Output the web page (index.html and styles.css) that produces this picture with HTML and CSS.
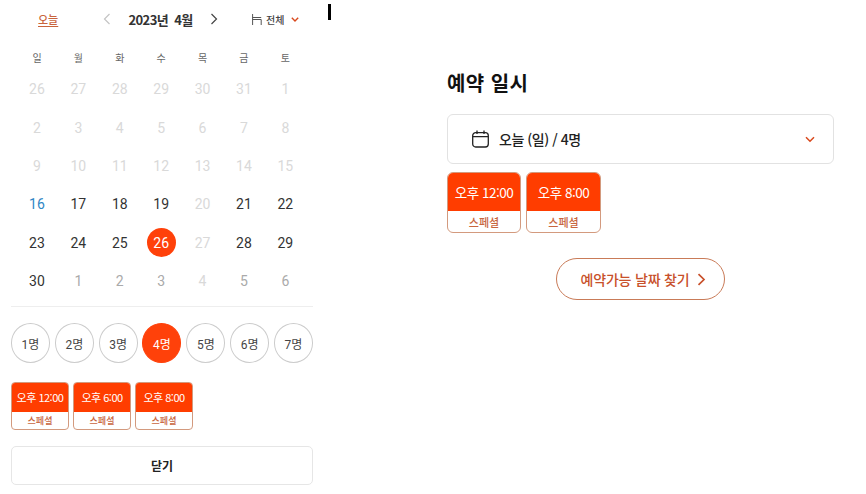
FILE: index.html
```html
<!DOCTYPE html>
<html lang="ko">
<head>
<meta charset="utf-8">
<title>예약 일시</title>
<link rel="stylesheet" href="styles.css">
</head>
<body>
<div class="cursor"></div>
<main class="page">
  <section class="panel">
    <header class="cal-head">
      <a class="today">오늘</a>
      <div class="month-nav">
        <svg class="nav" width="8" height="12" viewBox="0 0 8 12"><path d="M6.500 1 1.500 6l5 5" fill="none" stroke="#c4c4c4" stroke-width="1.200"/></svg>
        <strong class="month">2023년&nbsp; 4월</strong>
        <svg class="nav" width="8" height="12" viewBox="0 0 8 12"><path d="M1.500 1l5 5-5 5" fill="none" stroke="#444" stroke-width="1.200"/></svg>
      </div>
      <div class="seat-filter">
        <svg width="10" height="11" viewBox="0 0 10 11"><path d="M.6 0v11M.6 5.500h8.600V11M.6 3.500h8.600" fill="none" stroke="#555" stroke-width="1"/></svg>
        <span>전체</span>
        <svg width="8" height="5" viewBox="0 0 8 5"><path d="M.8.8 4 4l3.200-3.200" fill="none" stroke="#d9481c" stroke-width="1.400"/></svg>
      </div>
    </header>
    <div class="cal-grid">
      <span class="wd">일</span><span class="wd">월</span><span class="wd">화</span><span class="wd">수</span><span class="wd">목</span><span class="wd">금</span><span class="wd">토</span>
      <span class="d off">26</span><span class="d off">27</span><span class="d off">28</span><span class="d off">29</span><span class="d off">30</span><span class="d off">31</span><span class="d off">1</span>
      <span class="d off">2</span><span class="d off">3</span><span class="d off">4</span><span class="d off">5</span><span class="d off">6</span><span class="d off">7</span><span class="d off">8</span>
      <span class="d off">9</span><span class="d off">10</span><span class="d off">11</span><span class="d off">12</span><span class="d off">13</span><span class="d off">14</span><span class="d off">15</span>
      <span class="d holiday">16</span><span class="d">17</span><span class="d">18</span><span class="d">19</span><span class="d off">20</span><span class="d">21</span><span class="d">22</span>
      <span class="d">23</span><span class="d">24</span><span class="d">25</span><span class="d"><b class="sel">26</b></span><span class="d off">27</span><span class="d">28</span><span class="d">29</span>
      <span class="d">30</span><span class="d next">1</span><span class="d next">2</span><span class="d next">3</span><span class="d off">4</span><span class="d next">5</span><span class="d next">6</span>
    </div>
    <div class="party">
      <span class="p">1명</span><span class="p">2명</span><span class="p">3명</span><span class="p active">4명</span><span class="p">5명</span><span class="p">6명</span><span class="p">7명</span>
    </div>
    <div class="slots small">
      <div class="slot"><div class="time">오후 12:00</div><div class="kind">스페셜</div></div>
      <div class="slot"><div class="time">오후 6:00</div><div class="kind">스페셜</div></div>
      <div class="slot"><div class="time">오후 8:00</div><div class="kind">스페셜</div></div>
    </div>
    <button class="close">닫기</button>
  </section>
  <section class="detail">
    <h2 class="title">예약 일시</h2>
    <div class="picker">
      <svg width="17" height="18" viewBox="0 0 17 18"><rect x=".7" y="2.600" width="15.600" height="14.400" rx="3" fill="none" stroke="#222" stroke-width="1.300"/><path d="M.7 6.600h15.600M5 .6v3.400M12 .6v3.400" fill="none" stroke="#222" stroke-width="1.300"/></svg>
      <span class="picker-text">오늘 (일) / 4명</span>
      <svg class="picker-caret" width="10" height="7" viewBox="0 0 10 7"><path d="M1 1.200 5 5.200l4-4" fill="none" stroke="#d9481c" stroke-width="1.500"/></svg>
    </div>
    <div class="slots large">
      <div class="slot"><div class="time">오후 12:00</div><div class="kind">스페셜</div></div>
      <div class="slot"><div class="time">오후 8:00</div><div class="kind">스페셜</div></div>
    </div>
    <div class="find-wrap">
      <button class="find">예약가능 날짜 찾기
        <svg width="9" height="13" viewBox="0 0 9 13"><path d="M1.500 1.200 7 6.500l-5.500 5.300" fill="none" stroke="#c8502a" stroke-width="1.700"/></svg>
      </button>
    </div>
  </section>
</main>
</body>
</html>
```
FILE: styles.css
```css
* { box-sizing: border-box; }
html, body { margin: 0; padding: 0; background: #fff; }
body {
  width: 866px;
  height: 494px;
  overflow: hidden;
  position: relative;
  font-family: "Noto Sans CJK KR", "Noto Sans", sans-serif;
  color: #222;
}
.cursor { position: absolute; left: 328px; top: 4px; width: 3px; height: 16px; background: #000; }
.page { display: flex; align-items: flex-start; padding-left: 11px; }
.panel { width: 302px; flex: none; }
.cal-head { display: flex; align-items: center; height: 38px; }
.today { width: 74px; padding-left: 27px; font-size: 11px; font-weight: 500; color: #c9643c; text-decoration: underline; text-underline-offset: 2px; }
.month-nav { display: flex; align-items: center; width: 133px; padding-left: 18px; }
.month-nav .nav { flex: none; }
.month { font-size: 13px; font-weight: 700; letter-spacing: -.6px; color: #333; white-space: nowrap; margin: 0 auto; }
.seat-filter { display: flex; align-items: center; margin-left: 34px; font-size: 10px; font-weight: 500; color: #444; gap: 4px; }
.seat-filter span { margin-right: 3px; }
.cal-grid { display: grid; grid-template-columns: repeat(7, 41.400px); margin-top: 7px; padding-left: 5.300px; grid-template-rows: 25px; grid-auto-rows: 38.400px; padding-bottom: 6px; border-bottom: 1px solid #eee; }
.wd, .d { display: flex; align-items: center; justify-content: center; }
.wd { font-size: 10px; color: #666; }
.d { font-size: 14px; font-family: "Roboto", sans-serif; color: #333; }
.off { color: #d9d9d9; }
.next { color: #aaa; }
.holiday { color: #2f86c5; }
.sel { width: 29px; height: 29px; border-radius: 50%; background: #ff410a; color: #fff; font-weight: 400; display: flex; align-items: center; justify-content: center; }
.party { display: flex; justify-content: space-between; margin-top: 16px; }
.p { width: 39px; height: 39.500px; border-radius: 50%; border: 1px solid #ccc; display: flex; align-items: center; justify-content: center; font-size: 12px; color: #444; font-family: "Roboto", "Noto Sans CJK KR", sans-serif; }
.p.active { background: #ff410a; border-color: #ff410a; color: #fff; }
.slots { display: flex; }
.slot { border: 1px solid #d39a7e; overflow: hidden; background: #fff; }
.time { background: #ff3d00; color: #fff; display: flex; align-items: center; justify-content: center; margin: -1px -1px 0; white-space: nowrap; }
.kind { display: flex; align-items: center; justify-content: center; color: #c8653e; font-weight: 500; }
.small { gap: 4px; margin-top: 19.500px; }
.small .slot { width: 58px; height: 48px; border-radius: 4px; }
.small .time { height: 30px; font-size: 11px; letter-spacing: -.5px; }
.small .kind { height: 17px; font-size: 9px; }
.close { display: block; width: 302px; height: 39px; margin-top: 16px; border: 1px solid #e6e6e6; border-radius: 5px; background: #fff; font: 700 12px "Noto Sans CJK KR", sans-serif; color: #222; }
.detail { width: 387px; flex: none; margin-left: 134px; padding-top: 68px; }
.title { margin: 0; font-size: 20px; font-weight: 700; letter-spacing: .45px; line-height: 29px; color: #111; }
.picker { display: flex; align-items: center; height: 50px; margin-top: 17px; padding: 0 18px 0 24px; border: 1px solid #e2e2e2; border-radius: 6px; }
.picker-text { margin-left: 10px; font-size: 14px; font-weight: 500; color: #222; letter-spacing: -.45px; }
.picker-caret { margin-left: auto; }
.large { gap: 5px; margin-top: 8px; }
.large .slot { width: 74px; height: 61px; border-radius: 6px; }
.large .slot + .slot { width: 75px; }
.large .time { height: 39px; font-size: 13.500px; letter-spacing: -.5px; }
.large .kind { height: 21px; font-size: 11px; }
.find-wrap { display: flex; justify-content: center; margin-top: 25px; }
.find { display: flex; align-items: center; gap: 8px; height: 42px; width: 169px; padding: 0 0 0 6px; justify-content: center; border: 1px solid #c97b58; border-radius: 21px; background: #fff; font: 500 14px "Noto Sans CJK KR", sans-serif; letter-spacing: -.2px; color: #c8502a; }
```
